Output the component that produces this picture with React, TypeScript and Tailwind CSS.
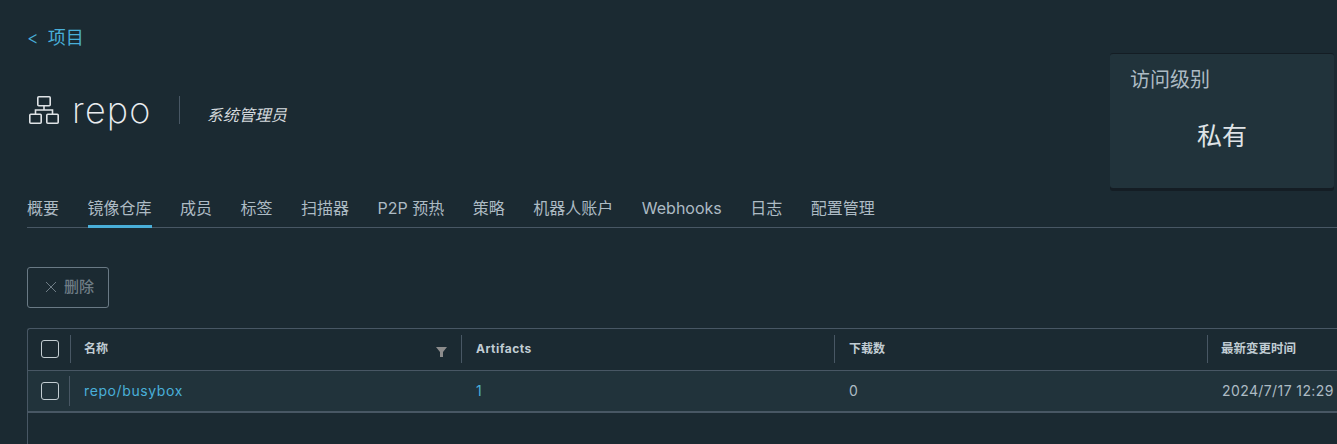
const FONT = "font-['Inter','Noto_Sans_CJK_SC',sans-serif]";

const tabs = ['概要', '镜像仓库', '成员', '标签', '扫描器', 'P2P 预热', '策略', '机器人账户', 'Webhooks', '日志', '配置管理'];

const ProjectIcon = () => (
  <svg className="ml-[2px]" width="30" height="28" viewBox="0 0 30 28" fill="none" stroke="#dfe3e6" strokeWidth="1.6">
    <rect x="8.8" y="0.8" width="12.4" height="9" rx="1" />
    <rect x="0.8" y="18.2" width="11.4" height="9" rx="1" />
    <rect x="17.8" y="18.2" width="11.4" height="9" rx="1" />
    <path d="M15 9.8V14M6.5 18.2V14H23.5V18.2" />
  </svg>
);

const Checkbox = () => (
  <div className="h-[18px] w-[18px] rounded-[3px] border border-[#c3ced3]" />
);

const App = () => {
  return (
    <div className={`${FONT} h-[444px] w-[1337px] overflow-hidden bg-[#1b2a32] pl-[27px]`}>
      <div className="flex h-[188px] justify-between pr-[3px]">
        <div className="flex flex-col">
          <a className="mt-[26px] flex items-center gap-[9px] text-[18px] leading-[24px] text-[#49afd9]">
            <span className="font-light">&lt;</span>
            <span>项目</span>
          </a>
          <div className="mt-[38px] flex items-center">
            <ProjectIcon />
            <span className="ml-[13px] text-[36px] font-extralight leading-[44px] tracking-[1.2px] text-[#eaedf0]">repo</span>
            <span className="ml-[27px] h-[28px] w-px bg-[#485764]" />
            <span className="ml-[27px] mt-[10px] text-[16px] italic leading-[24px] text-[#d5dade]">系统管理员</span>
          </div>
        </div>
        <div className="mt-[53px] flex h-[135px] w-[224px] flex-col rounded-[3px] border-t border-[#141d24] bg-[#21333b] px-[20px] shadow-[0_3px_0_#141d24]">
          <div className="mt-[14px] text-[20px] leading-[24px] text-[#adbbc4]">访问级别</div>
          <div className="mt-[28px] text-center text-[25px] leading-[32px] text-[#dfe3e6]">私有</div>
        </div>
      </div>

      <div className="flex h-[40px] gap-[28.5px] border-b border-[#485764]">
        {tabs.map((tab) => (
          <div
            key={tab}
            className={`h-[40px] pt-[8px] text-[16px] leading-[24px] text-[#adbbc4] ${tab === '镜像仓库' ? 'border-b-[3px] border-[#49afd9]' : ''}`}
          >
            {tab}
          </div>
        ))}
      </div>

      <button className="mt-[39px] flex h-[41px] w-[82px] items-center justify-center gap-[7px] rounded-[3px] border border-[#6a7a85] pb-[1px] pl-[3px] text-[15px] font-medium text-[#6f7d86]">
        <svg width="12" height="12" viewBox="0 0 12 12" stroke="#6f7d86" strokeWidth="1" fill="none">
          <path d="M1 1L11 11M11 1L1 11" />
        </svg>
        <span>删除</span>
      </button>

      <div className="mt-[20px] w-[1560px] rounded-t-[3px] border-l border-t border-[#485764]">
        <div className="flex h-[42px] items-center border-b border-[#485764] pb-[2px] text-[12px] font-bold text-[#c1cdd4]">
          <div className="flex w-[42px] justify-center pl-[2px]">
            <Checkbox />
          </div>
          <div className="relative flex h-[28px] w-[391px] items-center border-l border-[#485764] pl-[13px]">
            名称
            <svg className="absolute right-[14px] top-[12px]" width="11" height="10" viewBox="0 0 11 10" fill="#8c8c8c">
              <path d="M0 0H11L7 5V10H4V5Z" />
            </svg>
          </div>
          <div className="flex h-[28px] w-[373px] items-center border-l border-[#485764] pl-[14px] tracking-[0.5px]">Artifacts</div>
          <div className="flex h-[28px] w-[373px] items-center border-l border-[#485764] pl-[14px]">下载数</div>
          <div className="flex h-[28px] w-[373px] items-center border-l border-[#485764] pl-[13px] pt-[1px] text-[12.5px]">最新变更时间</div>
        </div>
        <div className="flex h-[42px] items-center border-b-2 border-[#485764] bg-[#21333b] text-[14px] text-[#adbbc4]">
          <div className="flex w-[41px] justify-center pl-[3px]">
            <Checkbox />
          </div>
          <div className="flex h-[30px] w-[392px] items-center border-l border-[#485764] pb-[2px] pl-[14px] tracking-[0.6px] text-[#49afd9]">repo/busybox</div>
          <div className="flex h-[30px] w-[373px] items-center pb-[2px] pl-[15px] text-[#49afd9]">1</div>
          <div className="flex h-[30px] w-[373px] items-center pb-[2px] pl-[15px]">0</div>
          <div className="flex h-[30px] w-[373px] items-center pb-[2px] pl-[15px] tracking-[0.4px]">2024/7/17 12:29</div>
        </div>
        <div className="h-[40px]" />
      </div>
    </div>
  );
};

export default App;
